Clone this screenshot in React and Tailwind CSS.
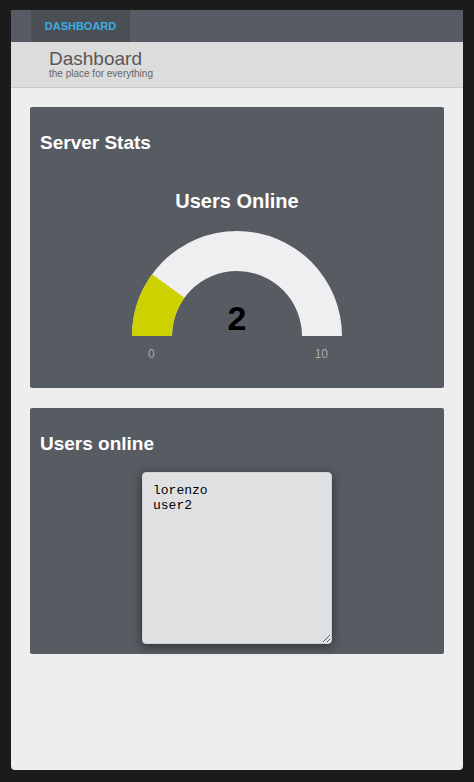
import React from 'react';

function Gauge({ value, max }) {
  const cx = 105, cy = 105, ro = 105, ri = 65;
  const a = Math.PI * (1 - value / max);
  const px = (r) => cx + r * Math.cos(a);
  const py = (r) => cy - r * Math.sin(a);
  const bg = `M0 105 A105 105 0 0 1 210 105 L170 105 A65 65 0 0 0 40 105 Z`;
  const fill = `M0 105 A105 105 0 0 1 ${px(ro)} ${py(ro)} L${px(ri)} ${py(ri)} A65 65 0 0 0 40 105 Z`;
  return (
    <div className="relative w-[210px] h-[135px]">
      <svg width="210" height="105" viewBox="0 0 210 105" className="block">
        <path d={bg} fill="#efeef0" />
        <path d={fill} fill="#cdd100" />
      </svg>
      <div className="absolute left-0 right-0 top-[70px] text-center text-[34px] font-bold leading-none text-black">{value}</div>
      <div className="flex justify-between pl-[16px] pr-[14px] pt-[12px] text-[12px] text-[#a9abae] leading-none">
        <span>0</span>
        <span>{max}</span>
      </div>
    </div>
  );
}

export default function App() {
  return (
    <div className="min-h-[782px] bg-[#1b1b1b] px-[11px] pt-[10px] pb-[12px] font-['Liberation_Sans',Arial,sans-serif]">
      <div className="min-h-[760px] bg-[#eeeeee] rounded-b-[4px] flex flex-col">
        <div className="h-[32px] bg-[#575b63] pl-[20px] flex">
          <div className="w-[99px] bg-[#4a4e55] flex items-center justify-center text-[11px] font-bold text-[#3aaee3]">DASHBOARD</div>
        </div>
        <div className="h-[46px] bg-[#dcdcdc] border-b border-[#c9c9c9] pl-[38px] pt-[6px]">
          <div className="text-[19px] leading-[21px] text-[#575757]">Dashboard</div>
          <div className="text-[10px] leading-[10px] text-[#666]">the place for everything</div>
        </div>
        <div className="px-[19px] pt-[19px] flex flex-col gap-[20px]">
          <div className="h-[281px] bg-[#575b62] rounded-[2px] px-[10px] pt-[24px]">
            <h2 className="text-[19px] font-bold text-white leading-[24px]">Server Stats</h2>
            <div className="flex flex-col items-center pt-[34px]">
              <div className="text-[20px] font-bold text-white leading-[24px]">Users Online</div>
              <div className="pt-[18px]">
                <Gauge value={2} max={10} />
              </div>
            </div>
          </div>
          <div className="h-[246px] bg-[#575b62] rounded-[2px] px-[10px] pt-[24px]">
            <h2 className="text-[19px] font-bold text-white leading-[24px]">Users online</h2>
            <div className="flex justify-center pt-[16px]">
              <textarea
                readOnly
                defaultValue={'lorenzo\nuser2'}
                className="w-[190px] h-[172px] bg-[#dfe0e2] rounded-[4px] px-[10px] py-[10px] text-[13px] leading-[15px] text-black font-['Liberation_Mono','Courier_New',monospace] shadow-[0_2px_10px_rgba(0,0,0,0.5)] border border-[#d0d1d3] outline-none resize"
              />
            </div>
          </div>
        </div>
      </div>
    </div>
  );
}
